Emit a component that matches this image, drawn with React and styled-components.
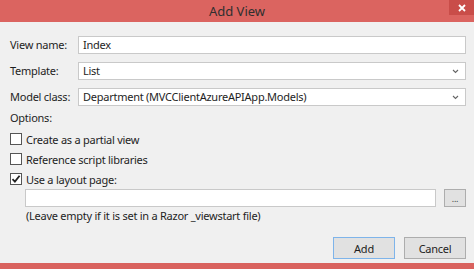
import styled, { createGlobalStyle } from 'styled-components'

const Global = createGlobalStyle`
  html, body {
    margin: 0;
    padding: 0;
    background: #f0f0f0;
  }
  body {
    font-family: 'Segoe UI', 'Noto Sans', 'Open Sans', sans-serif;
    font-size: 11px;
    letter-spacing: -0.25px;
    color: #1e1e1e;
  }
`

const Window = styled.div`
  width: 474px;
  height: 269px;
  display: flex;
  flex-direction: column;
  background: #f0f0f0;
  box-sizing: border-box;
  border-bottom: 6px solid #d9625e;
  overflow: hidden;
`

const TitleBar = styled.div`
  position: relative;
  height: 22px;
  flex-shrink: 0;
  background: #db6460;
  display: flex;
  align-items: center;
  justify-content: center;
  font-size: 13px;
  letter-spacing: 0;
  color: #2f2f2f;
`

const CloseButton = styled.div`
  position: absolute;
  top: 0;
  right: 0;
  width: 25px;
  height: 15px;
  background: #c94d49;
  color: #fff;
  display: flex;
  align-items: center;
  justify-content: center;
`

const Body = styled.div`
  flex: 1;
  display: flex;
  flex-direction: column;
  padding: 14px 8px 0 10px;
`

const Field = styled.div`
  display: grid;
  grid-template-columns: 68px 1fr;
  align-items: center;
  height: 18px;
  margin-bottom: 8px;
`

const Label = styled.span`
  line-height: 16px;
  white-space: nowrap;
`

const Box = styled.div`
  height: 18px;
  box-sizing: border-box;
  background: #fff;
  border: 1px solid #c9c9c9;
  display: flex;
  align-items: center;
  justify-content: space-between;
  padding: 0 6px 0 4px;
  line-height: 16px;
  white-space: nowrap;
`

const Options = styled.div`
  margin-top: -4px;
  line-height: 16px;
  margin-bottom: 5px;
`

const Check = styled.div`
  display: flex;
  align-items: center;
  gap: 4px;
  height: 16px;
  margin-bottom: ${p => (p.$last ? 2 : 4)}px;
`

const CheckBox = styled.span`
  width: 12px;
  height: 12px;
  box-sizing: border-box;
  border: 1px solid #555;
  background: #fff;
  display: flex;
  align-items: center;
  justify-content: center;
`

const LayoutRow = styled.div`
  display: flex;
  gap: 8px;
  padding-left: 15px;
`

const LayoutInput = styled(Box)`
  flex: 1;
`

const Browse = styled.div`
  width: 22px;
  height: 18px;
  box-sizing: border-box;
  background: #e1e1e1;
  border: 1px solid #adadad;
  display: flex;
  align-items: center;
  justify-content: center;
  font-size: 9px;
  color: #444;
`

const Hint = styled.div`
  padding-left: 16px;
  margin-top: 1px;
  line-height: 16px;
`

const Footer = styled.div`
  display: flex;
  justify-content: flex-end;
  gap: 9px;
  padding: 0 8px 4px 0;
`

const Button = styled.div`
  width: 62px;
  height: 22px;
  box-sizing: border-box;
  background: #e1e1e1;
  border: 1px solid ${p => (p.$default ? '#7eb4ea' : '#adadad')};
  display: flex;
  align-items: center;
  justify-content: center;
`

const Chevron = () => (
  <svg width="7" height="5" viewBox="0 0 7 5">
    <path d="M1 1l2.5 2.5L6 1" fill="none" stroke="#666" strokeWidth="1.1" />
  </svg>
)

const Tick = () => (
  <svg width="10" height="10" viewBox="0 0 10 10">
    <path d="M1.5 5.2l2.4 2.4L8.6 1.8" fill="none" stroke="#222" strokeWidth="1.8" />
  </svg>
)

const Cross = () => (
  <svg width="8" height="8" viewBox="0 0 8 8">
    <path d="M1 1l6 6M7 1l-6 6" stroke="#fff" strokeWidth="1.8" />
  </svg>
)

const App = () => {
  const checks = [
    { label: 'Create as a partial view', checked: false },
    { label: 'Reference script libraries', checked: false },
    { label: 'Use a layout page:', checked: true },
  ]

  return (
    <Window>
      <Global />
      <TitleBar>
        Add View
        <CloseButton>
          <Cross />
        </CloseButton>
      </TitleBar>
      <Body>
        <Field>
          <Label>View name:</Label>
          <Box>Index</Box>
        </Field>
        <Field>
          <Label>Template:</Label>
          <Box>
            List
            <Chevron />
          </Box>
        </Field>
        <Field>
          <Label>Model class:</Label>
          <Box>
            Department (MVCClientAzureAPIApp.Models)
            <Chevron />
          </Box>
        </Field>
        <Options>Options:</Options>
        {checks.map((c, i) => (
          <Check key={c.label} $last={i === checks.length - 1}>
            <CheckBox>{c.checked && <Tick />}</CheckBox>
            {c.label}
          </Check>
        ))}
        <LayoutRow>
          <LayoutInput />
          <Browse>...</Browse>
        </LayoutRow>
        <Hint>(Leave empty if it is set in a Razor _viewstart file)</Hint>
      </Body>
      <Footer>
        <Button $default>Add</Button>
        <Button>Cancel</Button>
      </Footer>
    </Window>
  )
}

export default App
